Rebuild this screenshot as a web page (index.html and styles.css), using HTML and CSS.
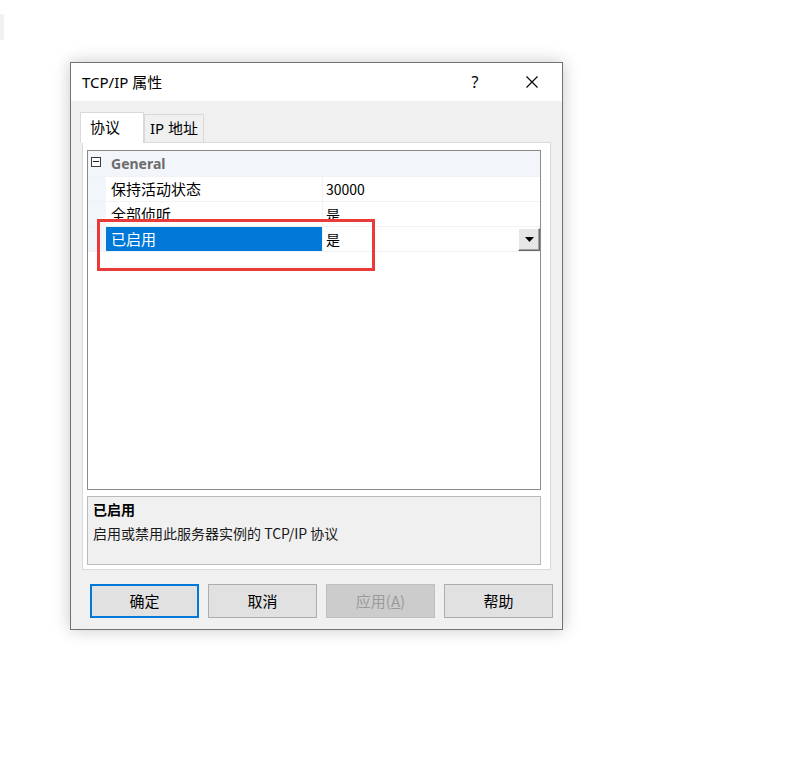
FILE: index.html
```html
<!DOCTYPE html>
<html lang="zh-CN">
<head>
<meta charset="utf-8">
<title>TCP/IP 属性</title>
<link rel="stylesheet" href="styles.css">
</head>
<body>
<div class="page">
  <div class="stub"></div>
  <div class="dialog">
    <div class="titlebar">
      <span class="title">TCP/IP 属性</span>
      <span class="tb-btn help">?</span>
      <span class="tb-btn close">
        <svg width="12" height="12" viewBox="0 0 12 12"><path d="M0.5 0.5 L11.5 11.5 M11.5 0.5 L0.5 11.5" stroke="#000" stroke-width="1.1" fill="none"/></svg>
      </span>
    </div>
    <div class="body">
      <div class="tabs">
        <div class="tab active">协议</div>
        <div class="tab">IP 地址</div>
      </div>
      <div class="panel">
        <div class="grid">
          <div class="cat-row"><span class="toggle"></span><span class="cat-label">General</span></div>
          <div class="rows">
            <div class="prop-row"><div class="margin"></div><div class="name">保持活动状态</div><div class="value">30000</div></div>
            <div class="prop-row"><div class="margin"></div><div class="name">全部侦听</div><div class="value">是</div></div>
            <div class="prop-row selected"><div class="margin"></div><div class="name">已启用</div><div class="value">是<span class="dd"><svg width="9" height="5" viewBox="0 0 9 5"><polygon points="0,0 9,0 4.5,5" fill="#000"/></svg></span></div></div>
          </div>
        </div>
        <div class="desc">
          <div class="desc-title">已启用</div>
          <div class="desc-text">启用或禁用此服务器实例的 TCP/IP 协议</div>
        </div>
      </div>
      <div class="buttons">
        <div class="btn default">确定</div>
        <div class="btn">取消</div>
        <div class="btn disabled">应用(<u>A</u>)</div>
        <div class="btn">帮助</div>
      </div>
    </div>
  </div>
  <div class="annot"></div>
</div>
</body>
</html>
```

FILE: styles.css
```css
html, body {
  margin: 0;
  padding: 0;
  background: #ffffff;
}

body {
  font-family: "Noto Sans", "Noto Sans CJK SC", sans-serif;
  color: #000;
}

.page {
  position: relative;
  width: 801px;
  height: 774px;
  overflow: hidden;
}

.stub {
  width: 4px;
  height: 26px;
  margin-top: 14px;
  background: #f2f2f2;
}

.dialog {
  box-sizing: border-box;
  margin-top: 22px;
  margin-left: 70px;
  width: 493px;
  height: 568px;
  border: 1px solid #727272;
  background: #f0f0f0;
  box-shadow: 0 0 16px rgba(0, 0, 0, 0.22);
  display: flex;
  flex-direction: column;
}

.titlebar {
  height: 38px;
  background: #ffffff;
  display: flex;
  align-items: center;
  padding-left: 11px;
}

.title {
  font-size: 15px;
  line-height: 20px;
}

.tb-btn {
  width: 46px;
  height: 38px;
  display: flex;
  align-items: center;
  justify-content: center;
}

.help {
  margin-left: auto;
  margin-right: 11px;
  font-size: 16px;
  font-family: "Noto Sans", sans-serif;
}

.close {
  margin-right: 7px;
}

.body {
  flex: 1;
  padding-top: 11px;
}

.tabs {
  display: flex;
  align-items: flex-end;
  height: 30px;
  margin-left: 9px;
}

.tab {
  box-sizing: border-box;
  height: 28px;
  width: 60px;
  border: 1px solid #d9d9d9;
  border-bottom: none;
  background: #f0f0f0;
  font-family: "Noto Sans", "Noto Sans CJK SC", sans-serif;
  font-size: 15px;
  line-height: 26px;
  padding-left: 5px;
}

.tab.active {
  position: relative;
  z-index: 1;
  width: 64px;
  height: 31px;
  margin-bottom: -1px;
  background: #ffffff;
  padding-left: 9px;
  line-height: 28px;
}

.panel {
  box-sizing: border-box;
  margin-left: 11px;
  width: 469px;
  height: 428px;
  background: #ffffff;
  border: 1px solid #d9d9d9;
  padding: 7px 9px 4px 4px;
  display: flex;
  flex-direction: column;
}

.grid {
  box-sizing: border-box;
  height: 340px;
  border: 1px solid #8a8a8a;
  background: #ffffff;
}

.cat-row {
  height: 25px;
  background: #f2f5fa;
  display: flex;
  align-items: center;
}

.toggle {
  box-sizing: border-box;
  width: 10px;
  height: 10px;
  margin-left: 3px;
  margin-top: -3px;
  border: 1px solid #3c3c3c;
  background: #ffffff;
  position: relative;
}

.toggle::after {
  content: "";
  position: absolute;
  left: 1px;
  right: 1px;
  top: 3px;
  height: 1px;
  background: #1e1e1e;
}

.cat-label {
  margin-left: 10px;
  font-weight: bold;
  font-size: 14px;
  color: #6d6d6d;
  line-height: 20px;
}

.rows {
  border-bottom: 1px solid #f0f2f6;
}

.prop-row {
  display: flex;
  height: 25px;
  box-sizing: border-box;
  border-top: 1px solid #f0f2f6;
}

.margin {
  width: 18px;
  background: #f2f5fa;
}

.name {
  box-sizing: border-box;
  width: 217px;
  padding-left: 5px;
  font-family: "Noto Sans CJK SC", sans-serif;
  font-size: 15px;
  line-height: 24px;
  border-right: 1px solid #f0f2f6;
}

.value {
  flex: 1;
  display: flex;
  align-items: center;
  padding-left: 3px;
  font-family: "Noto Sans CJK SC", sans-serif;
  font-size: 14px;
  line-height: 24px;
}

.selected .name {
  background: #0078d7;
  color: #ffffff;
}

.dd {
  margin-left: auto;
  box-sizing: border-box;
  width: 22px;
  height: 23px;
  margin-top: 1px;
  background: #e6e6e6;
  border-top: 1px solid #ffffff;
  border-left: 1px solid #ffffff;
  border-right: 1px solid #6a6a6a;
  border-bottom: 1px solid #6a6a6a;
  box-shadow: inset -1px -1px 0 #a0a0a0;
  display: flex;
  align-items: center;
  justify-content: center;
}

.desc {
  box-sizing: border-box;
  margin-top: 6px;
  height: 69px;
  border: 1px solid #b9b9b9;
  background: #f0f0f0;
  padding: 2px 0 0 5px;
  font-family: "Noto Sans CJK SC", sans-serif;
  font-size: 14px;
}

.desc-title {
  font-weight: bold;
  line-height: 20px;
}

.desc-text {
  margin-top: 4px;
  line-height: 20px;
  color: #1a1a1a;
}

.buttons {
  display: flex;
  gap: 9px;
  margin-top: 14px;
  margin-left: 19px;
}

.btn {
  box-sizing: border-box;
  width: 109px;
  height: 34px;
  background: #e1e1e1;
  border: 1px solid #adadad;
  font-family: "Noto Sans CJK SC", sans-serif;
  font-size: 15px;
  line-height: 32px;
  text-align: center;
}

.btn.default {
  border: 2px solid #0078d7;
  line-height: 30px;
}

.btn.disabled {
  background: #cccccc;
  border-color: #bfbfbf;
  color: #9a9a9a;
}

.annot {
  position: absolute;
  left: 97px;
  top: 219px;
  width: 278px;
  height: 52px;
  box-sizing: border-box;
  border: 3px solid #ea3a3a;
}
```
